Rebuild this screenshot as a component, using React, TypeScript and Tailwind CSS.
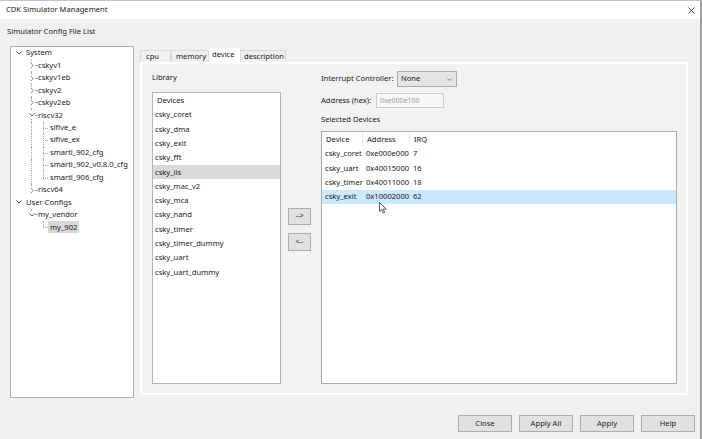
import React from 'react';

type TreeRow = {
  label: string;
  level: 0 | 1 | 2;
  chev?: 'open' | 'closed';
  g1?: 'full' | 'half';
  g2?: 'full' | 'half';
  selected?: boolean;
};

const tree: TreeRow[] = [
  { label: 'System', level: 0, chev: 'open' },
  { label: 'cskyv1', level: 1, chev: 'closed', g1: 'full' },
  { label: 'cskyv1eb', level: 1, chev: 'closed', g1: 'full' },
  { label: 'cskyv2', level: 1, chev: 'closed', g1: 'full' },
  { label: 'cskyv2eb', level: 1, chev: 'closed', g1: 'full' },
  { label: 'riscv32', level: 1, chev: 'open', g1: 'full' },
  { label: 'sifive_e', level: 2, g1: 'full', g2: 'full' },
  { label: 'sifive_ex', level: 2, g1: 'full', g2: 'full' },
  { label: 'smartl_902_cfg', level: 2, g1: 'full', g2: 'full' },
  { label: 'smartl_902_v0.8.0_cfg', level: 2, g1: 'full', g2: 'full' },
  { label: 'smartl_906_cfg', level: 2, g1: 'full', g2: 'half' },
  { label: 'riscv64', level: 1, chev: 'closed', g1: 'half' },
  { label: 'User Configs', level: 0, chev: 'open' },
  { label: 'my_vendor', level: 1, chev: 'open', g1: 'half' },
  { label: 'my_902', level: 2, g2: 'half', selected: true }
];

const library = [
  'csky_coret',
  'csky_dma',
  'csky_exit',
  'csky_fft',
  'csky_iis',
  'csky_mac_v2',
  'csky_mca',
  'csky_nand',
  'csky_timer',
  'csky_timer_dummy',
  'csky_uart',
  'csky_uart_dummy'
];

const selectedDevices = [
  { device: 'csky_coret', address: '0xe000e000', irq: '7' },
  { device: 'csky_uart', address: '0x40015000', irq: '16' },
  { device: 'csky_timer', address: '0x40011000', irq: '18' },
  { device: 'csky_exit', address: '0x10002000', irq: '62' }
];

function Chevron({ open }: { open: boolean }) {
  return open ? (
    <svg width="6" height="4" viewBox="0 0 6 4" className="block">
      <path d="M0.5 0.5 L3 3 L5.5 0.5" fill="none" stroke="#555" strokeWidth="1" />
    </svg>
  ) : (
    <svg width="4" height="7" viewBox="0 0 4 7" className="block">
      <path d="M0.7 0.7 L3.2 3.5 L0.7 6.3" fill="none" stroke="#8a8a8a" strokeWidth="1" />
    </svg>
  );
}

function Guide({ left, kind }: { left: string; kind: 'full' | 'half' }) {
  return (
    <span
      className={`absolute top-0 w-0 border-l border-dotted border-[#a6a6a6] ${left} ${
        kind === 'full' ? 'bottom-0' : 'h-1/2'
      }`}
    />
  );
}

function TreeItem({ row }: { row: TreeRow }) {
  return (
    <div className="relative flex items-center h-[12.45px]">
      {row.g1 && <Guide left="left-[20px]" kind={row.g1} />}
      {row.g2 && <Guide left="left-[32px]" kind={row.g2} />}
      {row.level === 0 && (
        <>
          <span className="ml-[5px] w-[6px] flex justify-center bg-white">
            <Chevron open={row.chev === 'open'} />
          </span>
          <span className="ml-[4px]">{row.label}</span>
        </>
      )}
      {row.level === 1 && (
        <>
          <span className="ml-[18px] w-[6px] h-[8px] flex items-center justify-center bg-white relative">
            <Chevron open={row.chev === 'open'} />
          </span>
          <span className="w-[2px] border-t border-dotted border-[#a6a6a6]" />
          <span className="ml-[1px]">{row.label}</span>
        </>
      )}
      {row.level === 2 && (
        <>
          <span className="absolute left-[32px] top-1/2 w-[5px] border-t border-dotted border-[#a6a6a6]" />
          <span
            className={`ml-[37px] px-[2px] h-[12px] flex items-center ${row.selected ? 'bg-[#d9d9d9]' : ''}`}
          >
            {row.label}
          </span>
        </>
      )}
    </div>
  );
}

function WinButton({ label, className }: { label: string; className: string }) {
  return (
    <button
      type="button"
      className={`bg-[#e1e1e1] border border-[#adadad] text-[#1f1f1f] flex items-center justify-center ${className}`}
    >
      {label}
    </button>
  );
}

export default function App() {
  const tabs = [
    { name: 'cpu', w: 'w-[31px] pl-[5px]' },
    { name: 'memory', w: 'w-[38px] pl-[4px]' },
    { name: 'device', w: 'w-[31px] pl-[3px]', active: true },
    { name: 'description', w: 'w-[46px] pl-[3px]' }
  ];

  return (
    <div
      className="w-[702px] h-[439px] bg-[#f0f0f0] border-t border-[#c4c4c4] border-r-[2px] border-r-[#a0a0a0] overflow-hidden text-[7.6px] text-[#1a1a1a] leading-none whitespace-nowrap"
      style={{ fontFamily: '"Noto Sans", "Liberation Sans", sans-serif' }}
    >
      {/* title bar */}
      <div className="h-[18px] bg-white flex items-center justify-between pl-[6px] pr-[5px]">
        <span>CDK Simulator Management</span>
        <svg width="7" height="7" viewBox="0 0 7 7">
          <path d="M0.5 0.5 L6.5 6.5 M6.5 0.5 L0.5 6.5" stroke="#444" strokeWidth="1" />
        </svg>
      </div>

      <div className="h-[25px] flex items-center pl-[7px]">Simulator Config File List</div>

      <div className="flex h-[354px] pl-[10px]">
        {/* tree */}
        <div className="mt-[2px] w-[124px] h-[352px] bg-white border border-[#ababab]">
          {tree.map((row) => (
            <TreeItem key={row.label} row={row} />
          ))}
        </div>

        {/* tabs */}
        <div className="ml-[6px] w-[548px] flex flex-col">
          <div className="h-[18px] flex items-end">
            {tabs.map((t) =>
              t.active ? (
                <div key={t.name} className={`h-[14px] bg-white flex items-center ${t.w}`}>
                  {t.name}
                </div>
              ) : (
                <div
                  key={t.name}
                  className={`h-[12px] bg-[#f0f0f0] border border-b-0 border-[#dadada] flex items-center ${t.w}`}
                >
                  {t.name}
                </div>
              )
            )}
          </div>

          <div className="h-[333px] border-[2px] border-white bg-[#f2f2f2] flex pl-[10px]">
            {/* library */}
            <div className="w-[129px] flex flex-col">
              <div className="h-[28px] flex items-center">Library</div>
              <div className="h-[292px] bg-white border border-[#b4b4b4]">
                <div className="h-[15px] flex items-center pl-[4px]">Devices</div>
                {library.map((d) => (
                  <div
                    key={d}
                    className={`h-[14.3px] flex items-center pl-[2px] ${d === 'csky_iis' ? 'bg-[#d9d9d9]' : ''}`}
                  >
                    {d}
                  </div>
                ))}
              </div>
            </div>

            {/* move buttons */}
            <div className="ml-[7px] w-[23px] pt-[144px] flex flex-col gap-[8px]">
              <WinButton label="-->" className="h-[17px] w-[23px] text-[6.5px]" />
              <WinButton label="<--" className="h-[18px] w-[23px] text-[6.5px]" />
            </div>

            {/* selected */}
            <div className="ml-[10px] w-[356px] flex flex-col">
              <div className="mt-[7px] h-[16px] flex items-center">
                <span className="w-[76px]">Interrupt Controller:</span>
                <div className="w-[60px] h-[16px] bg-[#e5e5e5] border border-[#adadad] flex items-center justify-between pl-[3px] pr-[4px]">
                  <span>None</span>
                  <svg width="5" height="3" viewBox="0 0 5 3">
                    <path d="M0.5 0.5 L2.5 2.5 L4.5 0.5" fill="none" stroke="#666" strokeWidth="0.8" />
                  </svg>
                </div>
              </div>
              <div className="mt-[6px] h-[15px] flex items-center">
                <span className="w-[55px]">Address (hex):</span>
                <div className="w-[68px] h-[15px] bg-[#f7f7f7] border border-[#cccccc] flex items-center pl-[3px] text-[7px] text-[#a0a0a0]">
                  0xe000e100
                </div>
              </div>
              <div className="h-[23px] flex items-center">Selected Devices</div>
              <div className="relative h-[253px] bg-white border border-[#ababab]">
                <div className="h-[15px] flex items-center">
                  <span className="w-[41px] pl-[4px] h-full flex items-center border-r border-[#ececec]">Device</span>
                  <span className="w-[47px] pl-[4px] h-full flex items-center border-r border-[#ececec]">Address</span>
                  <span className="pl-[4px]">IRQ</span>
                </div>
                {selectedDevices.map((r, i) => (
                  <div
                    key={r.device}
                    className={`h-[14.3px] flex items-center ${i === 3 ? 'bg-[#cce8ff]' : ''}`}
                  >
                    <span className="w-[41px] pl-[3px]">{r.device}</span>
                    <span className="w-[47px] pl-[3px]">{r.address}</span>
                    <span className="pl-[3px]">{r.irq}</span>
                  </div>
                ))}
                {/* mouse pointer */}
                <svg
                  width="8"
                  height="12"
                  viewBox="0 0 8 12"
                  className="absolute left-[57px] top-[70px]"
                >
                  <path
                    d="M0.5 0.5 L0.5 9.5 L2.7 7.6 L4.2 11 L5.6 10.4 L4.2 7.1 L7.2 7.1 Z"
                    fill="#fff"
                    stroke="#333"
                    strokeWidth="0.8"
                  />
                </svg>
              </div>
            </div>
          </div>
        </div>
      </div>

      {/* footer buttons */}
      <div className="mt-[17px] flex justify-end gap-[7px] pr-[5px]">
        <WinButton label="Close" className="w-[54px] h-[17px]" />
        <WinButton label="Apply All" className="w-[54px] h-[17px]" />
        <WinButton label="Apply" className="w-[54px] h-[17px]" />
        <WinButton label="Help" className="w-[54px] h-[17px]" />
      </div>
    </div>
  );
}
